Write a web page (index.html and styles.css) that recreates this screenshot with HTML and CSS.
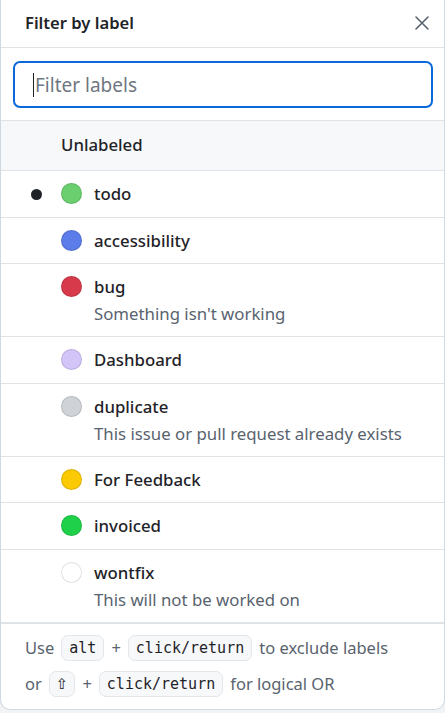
FILE: index.html
```html
<!DOCTYPE html>
<html lang="en">
<head>
<meta charset="utf-8">
<title>Filter by label</title>
<link rel="stylesheet" href="styles.css">
</head>
<body>
<div class="dialog">
  <header class="header">
    <h1 class="title">Filter by label</h1>
    <button class="close" aria-label="Close">
      <svg width="16" height="16" viewBox="0 0 16 16"><path d="M2 2 L14 14 M14 2 L2 14" stroke="#59636e" stroke-width="1.6" stroke-linecap="round" fill="none"/></svg>
    </button>
  </header>
  <div class="search">
    <div class="input"><span class="caret"></span><span class="placeholder">Filter labels</span></div>
  </div>
  <ul class="list">
    <li class="item unlabeled"><span class="check"></span><div class="text"><div class="name">Unlabeled</div></div></li>
    <li class="item"><span class="check on"></span><span class="swatch" style="background:#6bcf6f"></span><div class="text"><div class="name">todo</div></div></li>
    <li class="item"><span class="check"></span><span class="swatch" style="background:#5b7ce9"></span><div class="text"><div class="name">accessibility</div></div></li>
    <li class="item desc-item"><span class="check"></span><span class="swatch" style="background:#d73a4a"></span><div class="text"><div class="name">bug</div><div class="desc">Something isn't working</div></div></li>
    <li class="item"><span class="check"></span><span class="swatch" style="background:#d4c5f9"></span><div class="text"><div class="name">Dashboard</div></div></li>
    <li class="item desc-item"><span class="check"></span><span class="swatch" style="background:#cfd3d7"></span><div class="text"><div class="name">duplicate</div><div class="desc">This issue or pull request already exists</div></div></li>
    <li class="item"><span class="check"></span><span class="swatch" style="background:#fbca04"></span><div class="text"><div class="name">For Feedback</div></div></li>
    <li class="item"><span class="check"></span><span class="swatch" style="background:#1fd14a"></span><div class="text"><div class="name">invoiced</div></div></li>
    <li class="item desc-item"><span class="check"></span><span class="swatch" style="background:#ffffff"></span><div class="text"><div class="name">wontfix</div><div class="desc">This will not be worked on</div></div></li>
  </ul>
  <footer class="footer">
    <p class="hint">Use <kbd>alt</kbd> + <kbd>click/return</kbd> to exclude labels</p>
    <p class="hint">or <kbd class="shift">⇧</kbd> + <kbd>click/return</kbd> for logical OR</p>
  </footer>
</div>
</body>
</html>
```
FILE: styles.css
```css
* { box-sizing: border-box; }
html, body { margin: 0; padding: 0; background: #f2f3f5; }
body {
  font-family: "Noto Sans", "Open Sans", sans-serif;
  color: #1f2328;
}
.dialog {
  width: 445px;
  background: #ffffff;
  border: 1px solid #d1d9e0;
  border-top: none;
  border-radius: 0 0 10px 10px;
  overflow: hidden;
}
.header {
  height: 48px;
  display: flex;
  align-items: center;
  justify-content: space-between;
  padding: 0 13px 2px 24px;
  border-bottom: 1px solid #dfe2e6;
}
.title {
  margin: 0;
  font-size: 16.6px;
  font-weight: 570;
}
.close {
  border: 0;
  background: none;
  padding: 0;
  width: 18px;
  height: 18px;
  display: flex;
  align-items: center;
  justify-content: center;
}
.search {
  padding: 13px 11px 12px 12px;
  border-bottom: 1px solid #dfe2e6;
}
.input {
  height: 47px;
  border: 2px solid #0969da;
  border-radius: 7px;
  display: flex;
  align-items: center;
  padding-left: 18px;
}
.caret {
  width: 1px;
  height: 24px;
  background: #1f2328;
}
.placeholder {
  font-size: 19px;
  color: #6e7781;
  margin-left: 1px;
}
.list { list-style: none; margin: 0; padding: 0; }
.item {
  display: flex;
  align-items: flex-start;
  padding: 12px 0 11.5px 30px;
  border-bottom: 1px solid #dfe2e6;
}
.item.unlabeled {
  background: #f6f8fa;
  padding-top: 13px;
  padding-bottom: 14px;
}
.item.unlabeled .text { margin-left: 19px; }
.item.desc-item { padding-bottom: 10px; }
.check {
  width: 11px;
  height: 11px;
  margin-top: 6px;
  border-radius: 50%;
  flex: none;
}
.check.on { background: #1f2328; }
.swatch {
  width: 21px;
  height: 21px;
  border-radius: 50%;
  margin: 0 12px 0 19px;
  flex: none;
  box-shadow: inset 0 0 0 1px rgba(0,0,0,0.12);
}
.name {
  font-size: 16.8px;
  font-weight: 520;
  line-height: 22px;
}
.desc {
  font-size: 16.8px;
  line-height: 24px;
  margin-top: 4px;
  color: #59636e;
}
.footer {
  padding: 6px 24px 7px;
  border-top: 2px solid #dfe2e6;
  margin-top: -1px;
}
.hint {
  margin: 0;
  font-size: 16.5px;
  line-height: 36px;
  color: #59636e;
  display: flex;
  align-items: center;
  gap: 7px;
}
kbd {
  font-family: "DejaVu Sans Mono", "Liberation Mono", monospace;
  font-size: 15px;
  color: #1f2328;
  background: #f6f8fa;
  border: 1px solid #e3e6ea;
  border-radius: 7px;
  height: 26px;
  line-height: 24px;
  padding: 0 7px;
}
kbd.shift {
  font-family: "DejaVu Sans", sans-serif;
  font-size: 15px;
  padding: 0 6px;
}
```
